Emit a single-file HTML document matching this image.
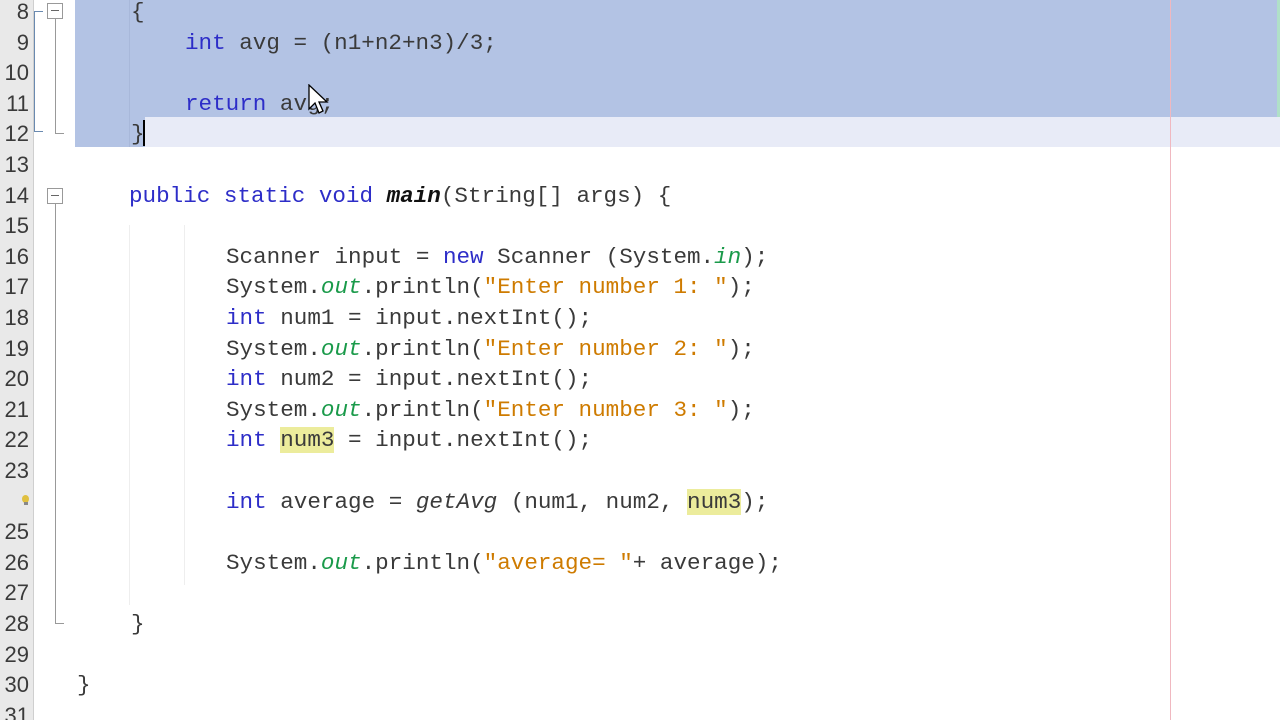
<!DOCTYPE html>
<html><head><style>
html,body{margin:0;width:1280px;height:720px;overflow:hidden;}
body{background:#fff;position:relative;font-family:"Liberation Mono",monospace;}
.g{position:absolute;left:0;top:0;width:33px;height:720px;background:#e9e9e9;border-right:1px solid #cfcfcf;}
.sel{position:absolute;left:75px;top:0;width:1205px;height:117px;background:#b3c3e4;}
.cur{position:absolute;left:75px;top:117px;width:1205px;height:30px;background:#e8ebf7;}
.sel2{position:absolute;left:75px;top:117px;width:70px;height:30px;background:#b3c3e4;}
.caret{position:absolute;left:143px;top:120px;width:2px;height:26px;background:#000;}
.margin{position:absolute;left:1170px;top:0;width:1px;height:720px;background:#f0b8c0;}
.rb{position:absolute;left:1277px;top:0;width:3px;height:117px;background:#b0e0c8;}
.ln{position:absolute;left:0;width:29px;text-align:right;font-family:"Liberation Sans",sans-serif;font-size:22px;color:#3a3a3a;line-height:30.6px;}
.c{position:absolute;font-size:22.6px;line-height:30.6px;color:#3a3a3a;white-space:pre;}
.k{color:#2d2dc8}.s{color:#ce7b00}.o{color:#1a9a4a;font-style:italic}.i{font-style:italic}.b{font-weight:bold;font-style:italic;color:#111}
.h{background:#ecec9c}
.fb{position:absolute;left:47px;width:16px;height:16px;border:1px solid #999;background:#fff;box-sizing:border-box;}
.fb:after{content:"";position:absolute;left:3px;top:6px;width:8px;height:1px;background:#666;}
.vl{position:absolute;width:1px;background:#999;}
.guide{position:absolute;width:1px;background:#eee;}
</style></head><body>
<div class="g"></div>
<div class="sel"></div><div class="cur"></div><div class="sel2"></div>
<div class="margin"></div><div class="rb"></div>
<div class="guide" style="left:129px;top:0;height:147px;background:#a8b8da"></div>
<div class="guide" style="left:129px;top:225px;height:380px"></div>
<div class="guide" style="left:184px;top:225px;height:360px"></div>
<div class="vl" style="left:34px;top:11px;height:1px;width:9px;background:#6a8ab0"></div>
<div class="vl" style="left:34px;top:11px;height:121px;background:#6a8ab0"></div>
<div class="vl" style="left:34px;top:131px;height:1px;width:9px;background:#6a8ab0"></div>
<div class="fb" style="top:3px"></div>
<div class="vl" style="left:55px;top:19px;height:114px"></div>
<div class="vl" style="left:55px;top:133px;height:1px;width:9px"></div>
<div class="fb" style="top:188px"></div>
<div class="vl" style="left:55px;top:204px;height:420px"></div>
<div class="vl" style="left:55px;top:623px;height:1px;width:9px"></div>
<div style="position:absolute;left:22px;top:495px;width:7px;height:8px;border-radius:50%;background:#e0c040"></div>
<div style="position:absolute;left:24px;top:502px;width:4px;height:3px;background:#888"></div>

<div class="ln" style="top:-3px">8</div><div class="ln" style="top:27.6px">9</div><div class="ln" style="top:58.2px">10</div><div class="ln" style="top:88.8px">11</div><div class="ln" style="top:119.4px">12</div><div class="ln" style="top:150px">13</div><div class="ln" style="top:180.6px">14</div><div class="ln" style="top:211.2px">15</div><div class="ln" style="top:241.8px">16</div><div class="ln" style="top:272.4px">17</div><div class="ln" style="top:303px">18</div><div class="ln" style="top:333.6px">19</div><div class="ln" style="top:364.2px">20</div><div class="ln" style="top:394.8px">21</div><div class="ln" style="top:425.4px">22</div><div class="ln" style="top:456px">23</div><div class="ln" style="top:517.2px">25</div><div class="ln" style="top:547.8px">26</div><div class="ln" style="top:578.4px">27</div><div class="ln" style="top:609px">28</div><div class="ln" style="top:639.6px">29</div><div class="ln" style="top:670.2px">30</div><div class="ln" style="top:700.8px">31</div>

<div class="c" style="left:131px;top:-3px">{</div>
<div class="c" style="left:185px;top:27.6px"><span class="k">int</span> avg = (n1+n2+n3)/3;</div>
<div class="c" style="left:185px;top:88.8px"><span class="k">return</span> avg;</div>
<div class="c" style="left:131px;top:119.4px">}</div>
<div class="c" style="left:129px;top:180.6px"><span class="k">public static void</span> <span class="b">main</span>(String[] args) {</div>
<div class="c" style="left:226px;top:241.8px">Scanner input = <span class="k">new</span> Scanner (System.<span class="o">in</span>);</div>
<div class="c" style="left:226px;top:272.4px">System.<span class="o">out</span>.println(<span class="s">"Enter number 1: "</span>);</div>
<div class="c" style="left:226px;top:303px"><span class="k">int</span> num1 = input.nextInt();</div>
<div class="c" style="left:226px;top:333.6px">System.<span class="o">out</span>.println(<span class="s">"Enter number 2: "</span>);</div>
<div class="c" style="left:226px;top:364.2px"><span class="k">int</span> num2 = input.nextInt();</div>
<div class="c" style="left:226px;top:394.8px">System.<span class="o">out</span>.println(<span class="s">"Enter number 3: "</span>);</div>
<div class="c" style="left:226px;top:425.4px"><span class="k">int</span> <span class="h">num3</span> = input.nextInt();</div>
<div class="c" style="left:226px;top:486.6px"><span class="k">int</span> average = <span class="i">getAvg</span> (num1, num2, <span class="h">num3</span>);</div>
<div class="c" style="left:226px;top:547.8px">System.<span class="o">out</span>.println(<span class="s">"average= "</span>+ average);</div>
<div class="c" style="left:131px;top:609px">}</div>
<div class="c" style="left:77px;top:670.2px">}</div>
<div class="caret"></div>
<svg style="position:absolute;left:308px;top:84px" width="24" height="34" viewBox="0 0 24 34"><path d="M1 1 L1 25 L7 19 L11 29 L15 27 L11 18 L19 18 Z" fill="#fff" stroke="#000" stroke-width="1.3"/></svg>
</body></html>
